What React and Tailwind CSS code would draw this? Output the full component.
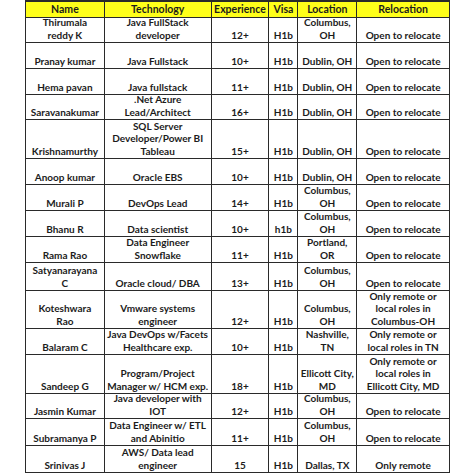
const cols = ['w-[79px]', 'w-[107px]', 'w-[58px]', 'w-[29px]', 'w-[59px]', 'w-[92px]'];

const rows = [
  { h: 'h-[25px]', c: [['Thirumala', 'reddy K'], ['Java FullStack', 'developer'], ['12+'], ['H1b'], ['Columbus,', 'OH'], ['Open to relocate']] },
  { h: 'h-[26px]', c: [['Pranay kumar'], ['Java Fullstack'], ['10+'], ['H1b'], ['Dublin, OH'], ['Open to relocate']] },
  { h: 'h-[26px]', c: [['Hema pavan'], ['Java fullstack'], ['11+'], ['H1b'], ['Dublin, OH'], ['Open to relocate']] },
  { h: 'h-[25px]', c: [['Saravanakumar'], ['.Net Azure', 'Lead/Architect'], ['16+'], ['H1b'], ['Dublin, OH'], ['Open to relocate']] },
  { h: 'h-[39px]', c: [['Krishnamurthy'], ['SQL Server', 'Developer/Power BI', 'Tableau'], ['15+'], ['H1b'], ['Dublin, OH'], ['Open to relocate']] },
  { h: 'h-[26px]', c: [['Anoop kumar'], ['Oracle EBS'], ['10+'], ['H1b'], ['Dublin, OH'], ['Open to relocate']] },
  { h: 'h-[26px]', c: [['Murali P'], ['DevOps Lead'], ['14+'], ['H1b'], ['Columbus,', 'OH'], ['Open to relocate']] },
  { h: 'h-[26px]', c: [['Bhanu R'], ['Data scientist'], ['10+'], ['h1b'], ['Columbus,', 'OH'], ['Open to relocate']] },
  { h: 'h-[26px]', c: [['Rama Rao'], ['Data Engineer', 'Snowflake'], ['11+'], ['H1b'], ['Portland,', 'OR'], ['Open to relocate']] },
  { h: 'h-[28px]', c: [['Satyanarayana', 'C'], ['Oracle cloud/ DBA'], ['13+'], ['H1b'], ['Columbus,', 'OH'], ['Open to relocate']] },
  { h: 'h-[38px]', c: [['Koteshwara', 'Rao'], ['Vmware systems', 'engineer'], ['12+'], ['H1b'], ['Columbus,', 'OH'], ['Only remote or', 'local roles in', 'Columbus-OH']] },
  { h: 'h-[26px]', c: [['Balaram C'], ['Java DevOps w/Facets', 'Healthcare exp.'], ['10+'], ['H1b'], ['Nashville,', 'TN'], ['Only remote or', 'local roles in TN']] },
  { h: 'h-[39px]', c: [['Sandeep G'], ['Program/Project', 'Manager w/ HCM exp.'], ['18+'], ['H1b'], ['Ellicott City,', 'MD'], ['Only remote or', 'local roles in', 'Ellicott City, MD']] },
  { h: 'h-[25px]', c: [['Jasmin Kumar'], ['Java developer with', 'IOT'], ['12+'], ['H1b'], ['Columbus,', 'OH'], ['Open to relocate']] },
  { h: 'h-[27px]', c: [['Subramanya P'], ['Data Engineer w/ ETL', 'and Abinitio'], ['11+'], ['H1b'], ['Columbus,', 'OH'], ['Open to relocate']] },
  { h: 'h-[26px]', c: [['Srinivas J'], ['AWS/ Data lead', 'engineer'], ['15'], ['H1b'], ['Dallas, TX'], ['Only remote']] },
];

const headers = ['Name', 'Technology', 'Experience', 'Visa', 'Location', 'Relocation'];

function Cell({ w, lines, last }) {
  return (
    <div className={`${w} flex flex-col justify-end items-center text-center ${last ? '' : 'border-r border-[#2a2a2a]'}`}>
      {lines.map((l, i) => (
        <span key={i} className="whitespace-nowrap">{l}</span>
      ))}
    </div>
  );
}

export default function App() {
  return (
    <div className="w-[474px] h-[476px] bg-white overflow-hidden" style={{ fontFamily: 'Lato, "Liberation Sans", sans-serif' }}>
      <div className="ml-[25px] w-[425px] border-l border-r border-b border-[#2a2a2a] text-[10px] leading-[12.8px] font-bold text-[#1c1c1c]">
        <div className="flex h-[18px] border-t-2 border-b border-[#2a2a2a] bg-[#ffff1a]">
          {headers.map((h, i) => (
            <div key={h} className={`${cols[i]} flex items-center justify-center text-[10.5px] ${i < 5 ? 'border-r border-[#2a2a2a]' : ''}`}>
              {h}
            </div>
          ))}
        </div>
        {rows.map((r, ri) => (
          <div key={ri} className={`flex ${r.h} ${ri < rows.length - 1 ? 'border-b border-[#2a2a2a]' : ''}`}>
            {r.c.map((lines, ci) => (
              <Cell key={ci} w={cols[ci]} lines={lines} last={ci === 5} />
            ))}
          </div>
        ))}
      </div>
    </div>
  );
}
